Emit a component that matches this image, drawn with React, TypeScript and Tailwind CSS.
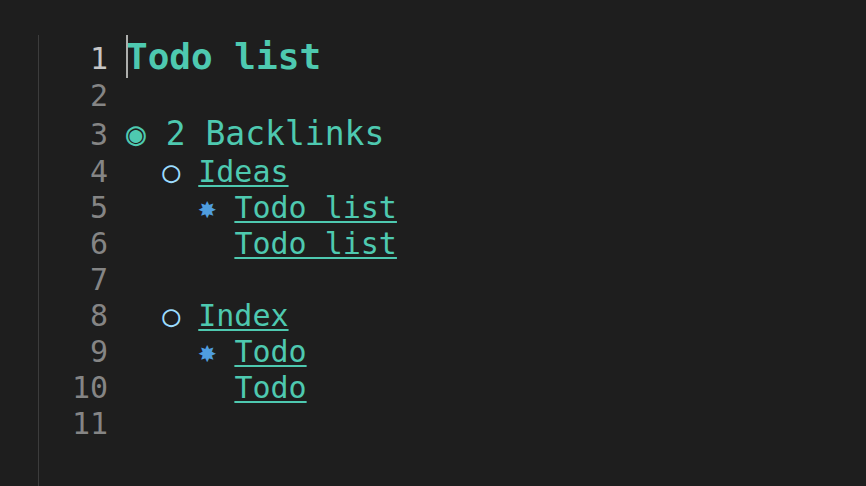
import React from "react";

const mono = { fontFamily: '"DejaVu Sans Mono", "Liberation Mono", monospace' };

function Row({
  n,
  active,
  size,
  children,
}: {
  n: number;
  active?: boolean;
  size: "h1" | "h3" | "p";
  children?: React.ReactNode;
}) {
  const sizeCls =
    size === "h1" ? "text-[36px] font-bold" : size === "h3" ? "text-[33px]" : "text-[30px]";
  return (
    <div className="flex items-baseline">
      <div
        className={`w-[69px] shrink-0 text-right text-[30px] leading-[1.2] ${
          active ? "text-[#c6c6c6]" : "text-[#858585]"
        }`}
      >
        {n}
      </div>
      <div className={`relative ml-[18px] whitespace-pre leading-[1.2] text-[#4ec9b0] ${sizeCls}`}>
        {children ?? "\u00a0"}
      </div>
    </div>
  );
}

const Link = ({ children }: { children: React.ReactNode }) => (
  <span className="underline decoration-2 underline-offset-[3px] decoration-[#4ec9b0]">{children}</span>
);

const Circle = () => <span className="text-[#9cdcfe]">○</span>;
const Star = () => <span className="text-[#4f9ddf]">✸</span>;

export default function App() {
  return (
    <div className="w-[866px] h-[486px] bg-[#1e1e1e] overflow-hidden" style={mono}>
      <div className="ml-[38px] mt-[35px] h-[451px] border-l border-[#3c3c3c]">
        <Row n={1} active size="h1">
          <span className="absolute left-0 top-0 h-full w-[2px] bg-[#aeafad]" />
          Todo list
        </Row>
        <Row n={2} size="p" />
        <Row n={3} size="h3">
          ◉ 2 Backlinks
        </Row>
        <Row n={4} size="p">
          {"  "}
          <Circle /> <Link>Ideas</Link>
        </Row>
        <Row n={5} size="p">
          {"    "}
          <Star /> <Link>Todo list</Link>
        </Row>
        <Row n={6} size="p">
          {"      "}
          <Link>Todo list</Link>
        </Row>
        <Row n={7} size="p" />
        <Row n={8} size="p">
          {"  "}
          <Circle /> <Link>Index</Link>
        </Row>
        <Row n={9} size="p">
          {"    "}
          <Star /> <Link>Todo</Link>
        </Row>
        <Row n={10} size="p">
          {"      "}
          <Link>Todo</Link>
        </Row>
        <Row n={11} size="p" />
      </div>
    </div>
  );
}
